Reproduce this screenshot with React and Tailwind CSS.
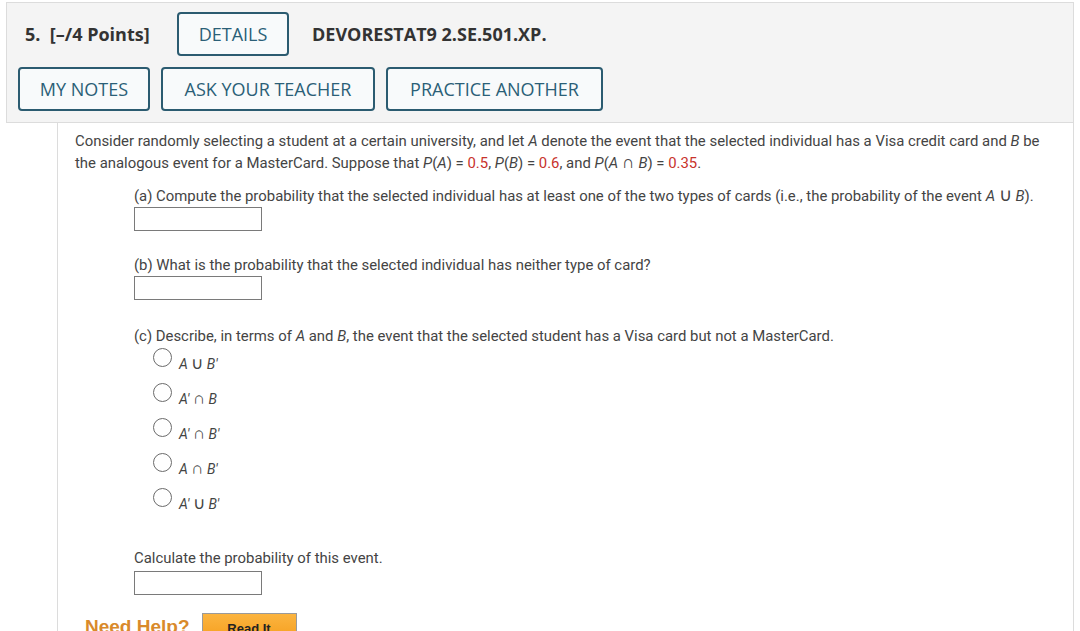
import React from "react";

const btn =
  "h-[44px] border-2 border-[#2b5b70] rounded-[4px] text-[#2b5f77] text-[18px] font-medium flex items-center justify-center bg-[#f8fafb]";

function I({ children }) {
  return <span className="italic">{children}</span>;
}

function Red({ children }) {
  return <span className="text-[#c8332c]">{children}</span>;
}

function S({ children }) {
  return (
    <span className="text-[1.2em] leading-[0] font-extralight" style={{ fontFamily: "'DejaVu Sans', sans-serif" }}>
      {children}
    </span>
  );
}

function Box() {
  return <div className="w-[128px] h-[24px] border border-[#7a7a7a] bg-white" />;
}

function Radio({ children }) {
  return (
    <div className="flex items-start h-[35px]">
      <div className="w-[19px] h-[19px] rounded-full border border-[#6b6b6b] bg-white mt-[-9px]" />
      <div className="ml-[7px] text-[14px] leading-[14px]">{children}</div>
    </div>
  );
}

export default function App() {
  return (
    <div
      className="w-[1080px] h-[631px] overflow-hidden bg-white pt-[2px] text-[#444]"
      style={{ fontFamily: "Roboto, 'Liberation Sans', sans-serif" }}
    >
      <div
        className="ml-[6px] w-[1068px] h-[121px] border border-[#dcdcdc] bg-[#f4f4f4] pt-[9px] pl-[11px]"
        style={{ fontFamily: "'Open Sans', 'Liberation Sans', sans-serif" }}
      >
        <div className="flex items-center h-[44px]">
          <div className="pl-[7px] w-[159px] font-bold text-[18px] text-[#333]">
            5.&nbsp; [–/4 Points]
          </div>
          <div className={btn + " w-[112px]"}>DETAILS</div>
          <div className="ml-[23px] font-bold text-[18px] text-[#333]">DEVORESTAT9 2.SE.501.XP.</div>
        </div>
        <div className="flex items-center gap-[11px] mt-[11px]">
          <div className={btn + " w-[132px]"}>MY NOTES</div>
          <div className={btn + " w-[214px]"}>ASK YOUR TEACHER</div>
          <div className={btn + " w-[217px]"}>PRACTICE ANOTHER</div>
        </div>
      </div>

      <div className="ml-[57px] w-[1017px] h-[520px] border-l border-r border-[#dcdcdc] pl-[17px] pt-[7px] text-[14.9px]">
        <p className="leading-[22px] whitespace-nowrap">
          Consider randomly selecting a student at a certain university, and let <I>A</I> denote the event that the
          selected individual has a Visa credit card and <I>B</I> be
          <br />
          the analogous event for a MasterCard. Suppose that <I>P</I>(<I>A</I>) = <Red>0.5</Red>, <I>P</I>(<I>B</I>) ={" "}
          <Red>0.6</Red>, and <I>P</I>(<I>A</I> <S>∩</S> <I>B</I>) = <Red>0.35</Red>.
        </p>
        <div className="pl-[59px]">
          <p className="mt-[12px] leading-[20px] whitespace-nowrap">
            (a) Compute the probability that the selected individual has at least one of the two types of cards (i.e.,
            the probability of the event <I>A</I> <S>∪</S> <I>B</I>).
          </p>
          <div className="mt-[1px]">
            <Box />
          </div>
          <p className="mt-[24px] leading-[20px]">(b) What is the probability that the selected individual has neither type of card?</p>
          <div className="mt-[1px]">
            <Box />
          </div>
          <p className="mt-[26px] leading-[20px]">
            (c) Describe, in terms of <I>A</I> and <I>B</I>, the event that the selected student has a Visa card but not
            a MasterCard.
          </p>
          <div className="pl-[19px] mt-[11px]">
            <Radio>
              <I>A</I> <S>∪</S> <I>B'</I>
            </Radio>
            <Radio>
              <I>A'</I> <S>∩</S> <I>B</I>
            </Radio>
            <Radio>
              <I>A'</I> <S>∩</S> <I>B'</I>
            </Radio>
            <Radio>
              <I>A</I> <S>∩</S> <I>B'</I>
            </Radio>
            <Radio>
              <I>A'</I> <S>∪</S> <I>B'</I>
            </Radio>
          </div>
          <p className="mt-[16px] leading-[20px]">Calculate the probability of this event.</p>
          <div className="mt-[3px]">
            <Box />
          </div>
        </div>
        <div className="flex items-start mt-[20px] pl-[10px]">
          <div
            className="font-bold text-[19px] leading-[24px] text-[#d98a2b]"
            style={{ fontFamily: "'Liberation Sans', Arial, sans-serif" }}
          >
            Need Help?
          </div>
          <div
            className="ml-[12px] mt-[-2px] w-[95px] h-[26px] border border-[#9a9a9a] bg-gradient-to-b from-[#fbb43f] to-[#f6a01c] flex justify-center pt-[5px] text-[13px] font-bold text-[#222]"
            style={{ fontFamily: "'Liberation Sans', Arial, sans-serif" }}
          >
            Read It
          </div>
        </div>
      </div>
    </div>
  );
}
